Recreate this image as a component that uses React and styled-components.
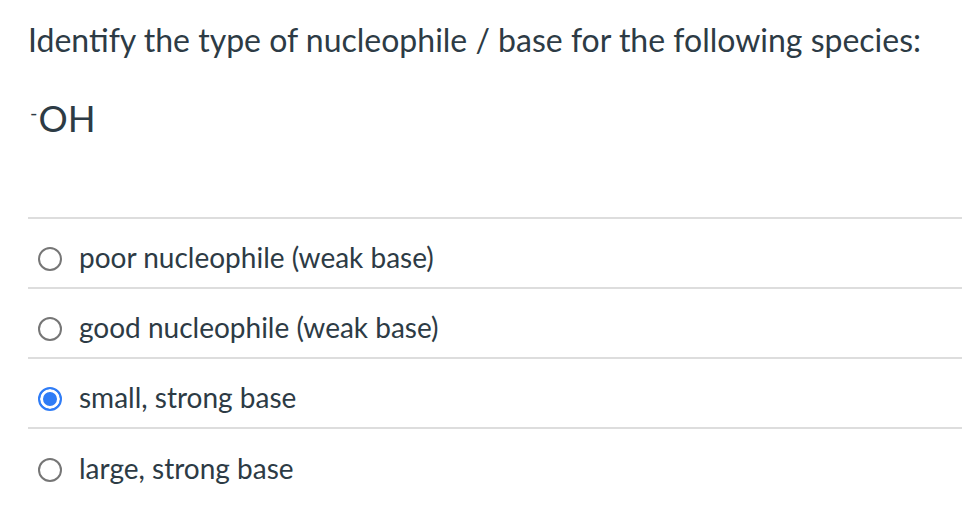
import styled, { createGlobalStyle } from 'styled-components';

const GlobalStyle = createGlobalStyle`
  html, body {
    margin: 0;
    padding: 0;
    background: #ffffff;
  }
  body {
    font-family: Lato, 'Noto Sans', sans-serif;
    color: #2d3b45;
  }
`;

const Question = styled.div`
  padding: 20px 0 0 28px;
`;

const Prompt = styled.p`
  margin: 0;
  font-size: 32px;
  line-height: 40px;
`;

const Species = styled.p`
  margin: 36px 0 0 2px;
  font-size: 36.5px;
  line-height: 44px;
  sup {
    font-size: 20px;
    vertical-align: 12px;
    line-height: 0;
    margin-right: 1px;
  }
`;

const Answers = styled.div`
  margin-top: 77px;
  border-top: 2px solid #dddddd;
`;

const Answer = styled.label`
  box-sizing: border-box;
  display: flex;
  align-items: center;
  gap: 17px;
  height: 70px;
  padding: 8px 0 0 10px;
  font-size: 28px;
  border-bottom: ${p => (p.last ? 'none' : '2px solid #dddddd')};
`;

const Radio = styled.span`
  box-sizing: border-box;
  width: 24px;
  height: 24px;
  margin-top: 3px;
  border-radius: 50%;
  flex-shrink: 0;
  border: 2px solid ${p => (p.checked ? '#2f7cf6' : '#767676')};
  background: ${p => (p.checked ? '#2f7cf6' : '#ffffff')};
  box-shadow: ${p => (p.checked ? 'inset 0 0 0 3px #ffffff' : 'none')};
`;

const options = [
  'poor nucleophile (weak base)',
  'good nucleophile (weak base)',
  'small, strong base',
  'large, strong base',
];

export default function App() {
  return (
    <>
      <GlobalStyle />
      <Question>
        <Prompt>Identify the type of nucleophile / base for the following species:</Prompt>
        <Species><sup>-</sup>OH</Species>
        <Answers>
          {options.map((o, i) => (
            <Answer key={o} last={i === options.length - 1}>
              <Radio checked={i === 2} />
              {o}
            </Answer>
          ))}
        </Answers>
      </Question>
    </>
  );
}
